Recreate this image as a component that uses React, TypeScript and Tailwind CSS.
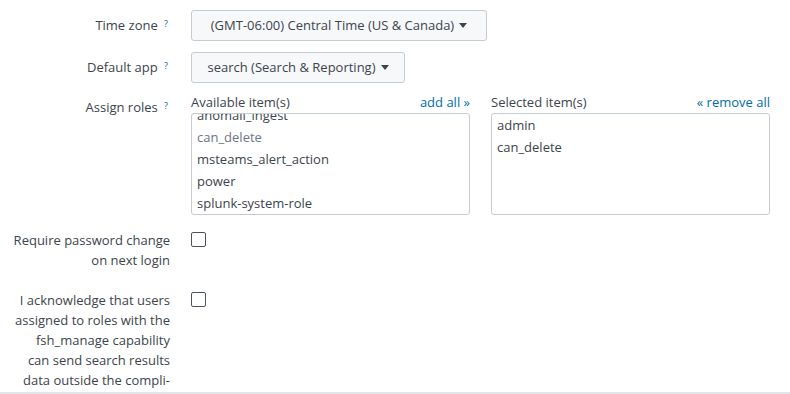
import React from 'react';

const font = { fontFamily: '"Open Sans", Lato, sans-serif' };

const Help = () => <sup className="ml-[3px] text-[9px] text-[#006eaa] relative -top-[3px]">?</sup>;

const Caret = () => (
  <svg width="8" height="5" viewBox="0 0 8 5" className="ml-[5px] inline-block">
    <path d="M0 0 L8 0 L4 5 Z" fill="#3c444d" />
  </svg>
);

const available = ['anomali_ingest', 'can_delete', 'msteams_alert_action', 'power', 'splunk-system-role'];
const selected = ['admin', 'can_delete'];

export default function App() {
  return (
    <div className="h-[394px] w-[790px] flex flex-col bg-white text-[13px] text-[#3c444d]" style={font}>
      <div className="flex-1 overflow-hidden">
        {/* Time zone */}
        <div className="flex mt-[10px]">
          <div className="w-[171px] pr-[3px] text-right leading-[31px]">
            Time zone <Help />
          </div>
          <div className="ml-[20px]">
            <button className="h-[31px] w-[296px] rounded-[3px] border border-[#c3cbd4] bg-[#f7f8fa] flex items-center justify-center">
              (GMT-06:00) Central Time (US &amp; Canada)
              <Caret />
            </button>
          </div>
        </div>

        {/* Default app */}
        <div className="flex mt-[11px]">
          <div className="w-[171px] pr-[3px] text-right leading-[31px]">
            Default app <Help />
          </div>
          <div className="ml-[20px]">
            <button className="h-[31px] w-[214px] rounded-[3px] border border-[#c3cbd4] bg-[#f7f8fa] flex items-center justify-center">
              search (Search &amp; Reporting)
              <Caret />
            </button>
          </div>
        </div>

        {/* Assign roles */}
        <div className="flex mt-[11px]">
          <div className="w-[171px] pr-[3px] pt-[5px] text-right leading-[16px]">
            Assign roles <Help />
          </div>
          <div className="ml-[20px] flex gap-[21px]">
            <div className="w-[279px]">
              <div className="flex justify-between leading-[16px] h-[19px]">
                <span>Available item(s)</span>
                <span className="text-[#006eaa]">add all »</span>
              </div>
              <div className="h-[102px] rounded-[3px] border border-[#c3cbd4] overflow-hidden">
                <ul className="-mt-[10px]">
                  {available.map((r) => (
                    <li key={r} className={`px-[5px] leading-[22px] ${r === 'can_delete' ? 'text-[#6b7785]' : ''}`}>
                      {r}
                    </li>
                  ))}
                </ul>
              </div>
            </div>
            <div className="w-[279px]">
              <div className="flex justify-between leading-[16px] h-[19px]">
                <span>Selected item(s)</span>
                <span className="text-[#006eaa]">« remove all</span>
              </div>
              <div className="h-[102px] rounded-[3px] border border-[#c3cbd4] overflow-hidden">
                <ul>
                  {selected.map((r) => (
                    <li key={r} className="px-[5px] leading-[22px]">
                      {r}
                    </li>
                  ))}
                </ul>
              </div>
            </div>
          </div>
        </div>

        {/* Require password change */}
        <div className="flex mt-[15px]">
          <div className="w-[171px] pr-[1px] text-right leading-[20px]">
            Require password change
            <br />
            on next login
          </div>
          <div className="ml-[20px] pt-[2px]">
            <span className="block h-[15px] w-[15px] rounded-[2px] border border-[#4b545e]" />
          </div>
        </div>

        {/* Acknowledge */}
        <div className="flex mt-[20px]">
          <div className="w-[171px] pr-[1px] text-right leading-[20px]">
            I acknowledge that users
            <br />
            assigned to roles with the
            <br />
            fsh_manage capability
            <br />
            can send search results
            <br />
            data outside the compli-
            <br />
            ance boundary.
          </div>
          <div className="ml-[20px] pt-[2px]">
            <span className="block h-[15px] w-[15px] rounded-[2px] border border-[#4b545e]" />
          </div>
        </div>
      </div>
      <div className="h-[2px] bg-[#e1e6eb]" />
    </div>
  );
}
